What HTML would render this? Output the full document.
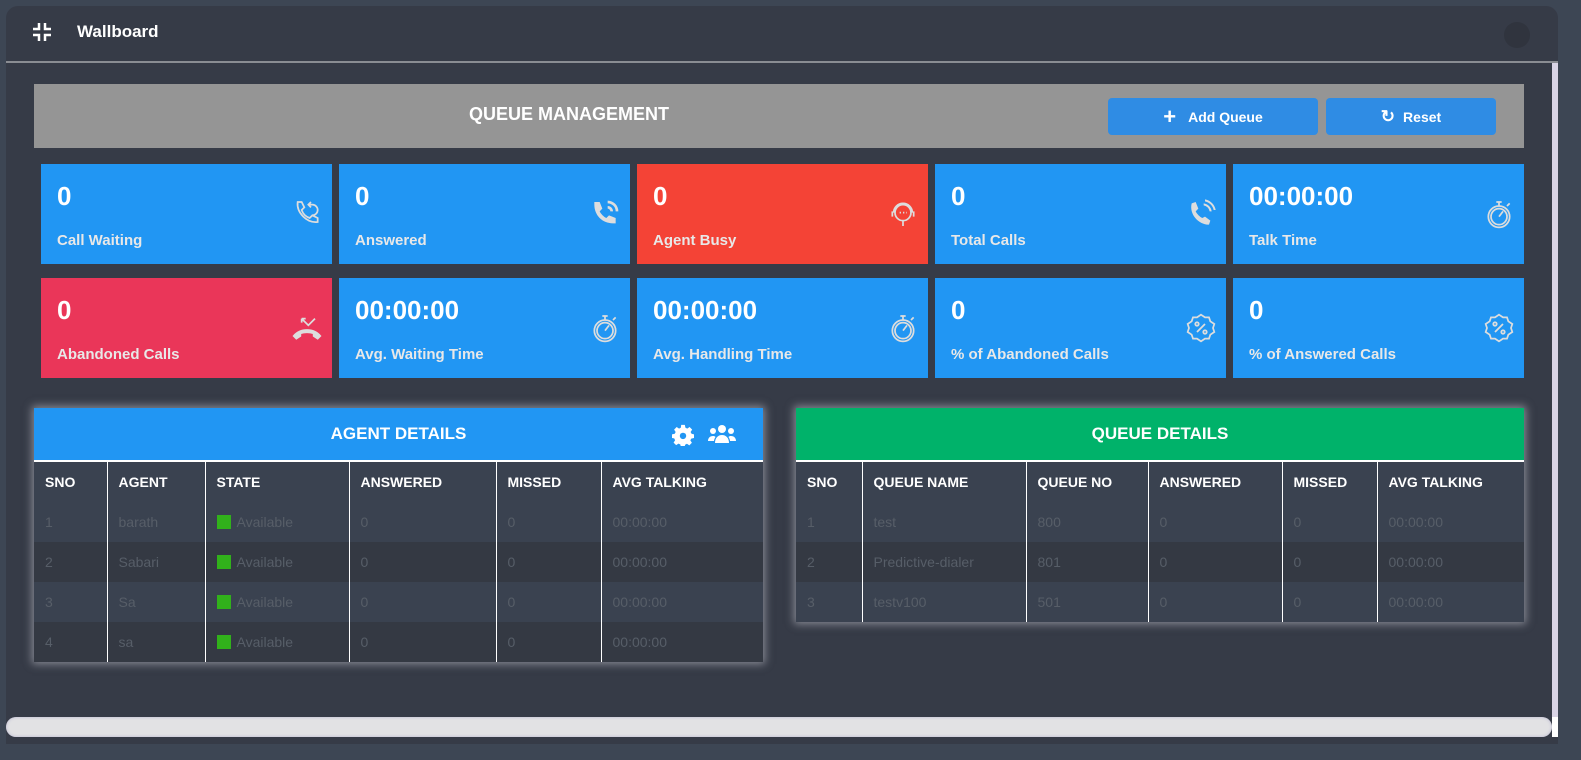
<!DOCTYPE html>
<html><head><meta charset="utf-8"><style>
*{margin:0;padding:0;box-sizing:border-box}
body{width:1581px;height:760px;background:#3d4654;font-family:"Liberation Sans",sans-serif;position:relative;overflow:hidden}
.abs{position:absolute}
#panel{left:6px;top:6px;width:1552px;height:738px;background:#363b47;border-radius:12px 12px 0 0}
.card{position:absolute;width:291px;height:100px;color:#fff}
.card .n{position:absolute;left:16px;top:17px;font-size:26px;font-weight:bold}
.card .l{position:absolute;left:16px;top:68px;font-size:15px;font-weight:bold;color:#e8e8e8}
.card svg{position:absolute;right:9px;top:34px;width:32px;height:32px;fill:none;stroke:#ddd;stroke-width:1.3}
.blue{background:#2196f3}.red{background:#f44336}.pink{background:#ea3659}
table{border-collapse:collapse;width:100%}
th,td{text-align:left;padding-left:11px;border-left:1px solid #fff;height:40px}
th:first-child,td:first-child{border-left:none}
th{color:#fff;font-size:14px;font-weight:bold;background:#3a4250}
td{color:#575e68;font-size:14px}
tr.o td{background:#3a4250} tr.e td{background:#343943}
.tbl{position:absolute;box-shadow:0 0 8px 2px rgba(200,200,210,.55)}
.th{height:54px;color:#fff;font-size:17px;font-weight:bold;text-align:center;line-height:52px;border-bottom:2px solid #fff}
.sq{display:inline-block;width:14px;height:14px;background:#31b11b;vertical-align:-2px;margin-right:6px}
.btn{position:absolute;top:98px;height:37px;background:#2f8ce4;border-radius:4px;color:#fff;font-size:14px;font-weight:bold;text-align:center;line-height:37px}
</style></head><body>
<div id="panel" class="abs"></div>
<svg class="abs" style="left:33px;top:23px" width="18" height="18" viewBox="0 0 18 18" fill="none" stroke="#fff" stroke-width="2.5"><path d="M6 0v6H0M12 0v6h6M6 18v-6H0M12 18v-6h6"/></svg>
<div class="abs" style="left:77px;top:22px;color:#fff;font-size:17px;font-weight:bold">Wallboard</div>
<div class="abs" style="left:1504px;top:22px;width:26px;height:26px;border-radius:50%;background:#30343e"></div>
<div class="abs" style="left:6px;top:61px;width:1552px;height:2px;background:#8a8d93"></div>
<div class="abs" style="left:1552px;top:63px;width:6px;height:654px;background:#d9d4e6"></div>
<div class="abs" style="left:6px;top:717px;width:1546px;height:20px;background:#e2e2e4;border-radius:10px;box-shadow:inset 0 0 3px #b8b5d0"></div>
<div class="abs" style="left:1552px;top:717px;width:6px;height:20px;background:#fff"></div>

<div class="abs" style="left:34px;top:84px;width:1490px;height:64px;background:#959595"></div>
<div class="abs" style="left:34px;top:104px;width:1070px;text-align:center;color:#fff;font-size:18px;font-weight:bold">QUEUE MANAGEMENT</div>
<div class="btn" style="left:1108px;width:210px"><span style="font-size:22px;vertical-align:-2px;margin-right:12px">+</span>Add Queue</div>
<div class="btn" style="left:1326px;width:170px"><span style="font-size:17px;margin-right:8px">&#x21bb;</span>Reset</div>

<div class="card blue" style="left:41px;top:164px"><div class="n">0</div><div class="l">Call Waiting</div><svg viewBox="0 0 24 24"><path d="M5 3l3 0 2 4-2 2c1 3 3 5 6 6l2-2 4 2v3c-8 1-16-7-15-15z"/><path d="M15 3l-2 2 2 2M13 5h3a4 4 0 010 8"/></svg></div>
<div class="card blue" style="left:339px;top:164px"><div class="n">0</div><div class="l">Answered</div><svg viewBox="0 0 24 24" style="fill:#ddd;stroke:none"><path d="M4 3h4l2 5-2 2c1 2 3 4 5 5l2-2 5 2v4h-2C10 19 4 13 4 5z"/><path d="M14 2a8 8 0 018 8h-2a6 6 0 00-6-6zM14 6a4 4 0 014 4h-2a2 2 0 00-2-2z"/></svg></div>
<div class="card red" style="left:637px;top:164px"><div class="n">0</div><div class="l">Agent Busy</div><svg viewBox="0 0 24 24"><circle cx="12" cy="11" r="6"/><path d="M5 11a7 7 0 0114 0M4 10v4M20 10v4M12 17v4"/><path d="M9.5 11h1M12 11h1M14.5 11h.5"/></svg></div>
<div class="card blue" style="left:935px;top:164px"><div class="n">0</div><div class="l">Total Calls</div><svg viewBox="0 0 24 24" style="fill:#ddd;stroke:none"><path d="M5 4l3-1 2 5-2 2c1 2 3 4 5 5l2-1 4 3-1 3C10 20 3 12 5 4z"/><path d="M14 4a7 7 0 016 6h-1.5A5.5 5.5 0 0014 5.5zM15 1a10 10 0 018 8h-1.5A8.5 8.5 0 0015 2.5z"/></svg></div>
<div class="card blue" style="left:1233px;top:164px"><div class="n">00:00:00</div><div class="l">Talk Time</div><svg viewBox="0 0 24 24"><circle cx="12" cy="14" r="8"/><circle cx="12" cy="14" r="6"/><path d="M10 3h4M12 3v3M18 6l2-2M12 14l3-4"/></svg></div>

<div class="card pink" style="left:41px;top:278px"><div class="n">0</div><div class="l">Abandoned Calls</div><svg viewBox="0 0 24 24"><path d="M8 5l5 5 5-5M8 5v3M8 5h3"/><path style="fill:#ddd" d="M2 18c5-6 15-6 20 0l-2 2-3-2v-2c-3-1-7-1-10 0v2l-3 2z"/></svg></div>
<div class="card blue" style="left:339px;top:278px"><div class="n">00:00:00</div><div class="l">Avg. Waiting Time</div><svg viewBox="0 0 24 24"><circle cx="12" cy="14" r="8"/><circle cx="12" cy="14" r="6"/><path d="M10 3h4M12 3v3M18 6l2-2M12 14l3-4"/></svg></div>
<div class="card blue" style="left:637px;top:278px"><div class="n">00:00:00</div><div class="l">Avg. Handling Time</div><svg viewBox="0 0 24 24"><circle cx="12" cy="14" r="8"/><circle cx="12" cy="14" r="6"/><path d="M10 3h4M12 3v3M18 6l2-2M12 14l3-4"/></svg></div>
<div class="card blue" style="left:935px;top:278px"><div class="n">0</div><div class="l">% of Abandoned Calls</div><svg viewBox="0 0 24 24"><path d="M12 2l3 2h3l1 3 3 2-1 3 1 3-3 2-1 3h-3l-3 2-3-2H6l-1-3-3-2 1-3-1-3 3-2 1-3h3z"/><path d="M9 15l6-6"/><circle cx="9" cy="9" r="1.3"/><circle cx="15" cy="15" r="1.3"/></svg></div>
<div class="card blue" style="left:1233px;top:278px"><div class="n">0</div><div class="l">% of Answered Calls</div><svg viewBox="0 0 24 24"><path d="M12 2l3 2h3l1 3 3 2-1 3 1 3-3 2-1 3h-3l-3 2-3-2H6l-1-3-3-2 1-3-1-3 3-2 1-3h3z"/><path d="M9 15l6-6"/><circle cx="9" cy="9" r="1.3"/><circle cx="15" cy="15" r="1.3"/></svg></div>

<div class="tbl" style="left:34px;top:408px;width:729px">
<div class="th" style="background:#2196f3">AGENT DETAILS</div>
<svg class="abs" style="left:638px;top:16px" width="22" height="22" viewBox="0 0 24 24"><path fill="#fff" d="M10 1h4l.6 3 2 1 2.6-1.7 2.8 2.8L20.3 8.7l1 2 2.7.6v4l-3 .6-1 2 1.7 2.6-2.8 2.8-2.6-1.7-2 1-.6 2.8h-4l-.6-3-2-1-2.6 1.7-2.8-2.8 1.7-2.6-1-2L0 15.3v-4l3-.6 1-2L2.3 6.1 5.1 3.3 7.7 5l2-1z"/><circle cx="12" cy="13" r="3.5" fill="#2196f3"/></svg>
<svg class="abs" style="left:674px;top:16px" width="28" height="20" viewBox="0 0 28 20" fill="#fff"><circle cx="14" cy="5" r="4"/><circle cx="5" cy="7" r="3"/><circle cx="23" cy="7" r="3"/><path d="M7 19c0-5 3-8 7-8s7 3 7 8z"/><path d="M0 17c0-3 2-5 5-5 1 0 2 .3 2.5 1-1 1.5-1.5 3-1.5 4z"/><path d="M28 17c0-3-2-5-5-5-1 0-2 .3-2.5 1 1 1.5 1.5 3 1.5 4z"/></svg>
<table><colgroup><col style="width:73px"><col style="width:98px"><col style="width:144px"><col style="width:147px"><col style="width:105px"><col></colgroup>
<tr><th>SNO</th><th>AGENT</th><th>STATE</th><th>ANSWERED</th><th>MISSED</th><th>AVG TALKING</th></tr>
<tr class="o"><td>1</td><td>barath</td><td><span class="sq"></span>Available</td><td>0</td><td>0</td><td>00:00:00</td></tr>
<tr class="e"><td>2</td><td>Sabari</td><td><span class="sq"></span>Available</td><td>0</td><td>0</td><td>00:00:00</td></tr>
<tr class="o"><td>3</td><td>Sa</td><td><span class="sq"></span>Available</td><td>0</td><td>0</td><td>00:00:00</td></tr>
<tr class="e"><td>4</td><td>sa</td><td><span class="sq"></span>Available</td><td>0</td><td>0</td><td>00:00:00</td></tr>
</table></div>

<div class="tbl" style="left:796px;top:408px;width:728px">
<div class="th" style="background:#00b26a">QUEUE DETAILS</div>
<table><colgroup><col style="width:66px"><col style="width:164px"><col style="width:122px"><col style="width:134px"><col style="width:95px"><col></colgroup>
<tr><th>SNO</th><th>QUEUE NAME</th><th>QUEUE NO</th><th>ANSWERED</th><th>MISSED</th><th>AVG TALKING</th></tr>
<tr class="o"><td>1</td><td>test</td><td>800</td><td>0</td><td>0</td><td>00:00:00</td></tr>
<tr class="e"><td>2</td><td>Predictive-dialer</td><td>801</td><td>0</td><td>0</td><td>00:00:00</td></tr>
<tr class="o"><td>3</td><td>testv100</td><td>501</td><td>0</td><td>0</td><td>00:00:00</td></tr>
</table></div>
</body></html>
